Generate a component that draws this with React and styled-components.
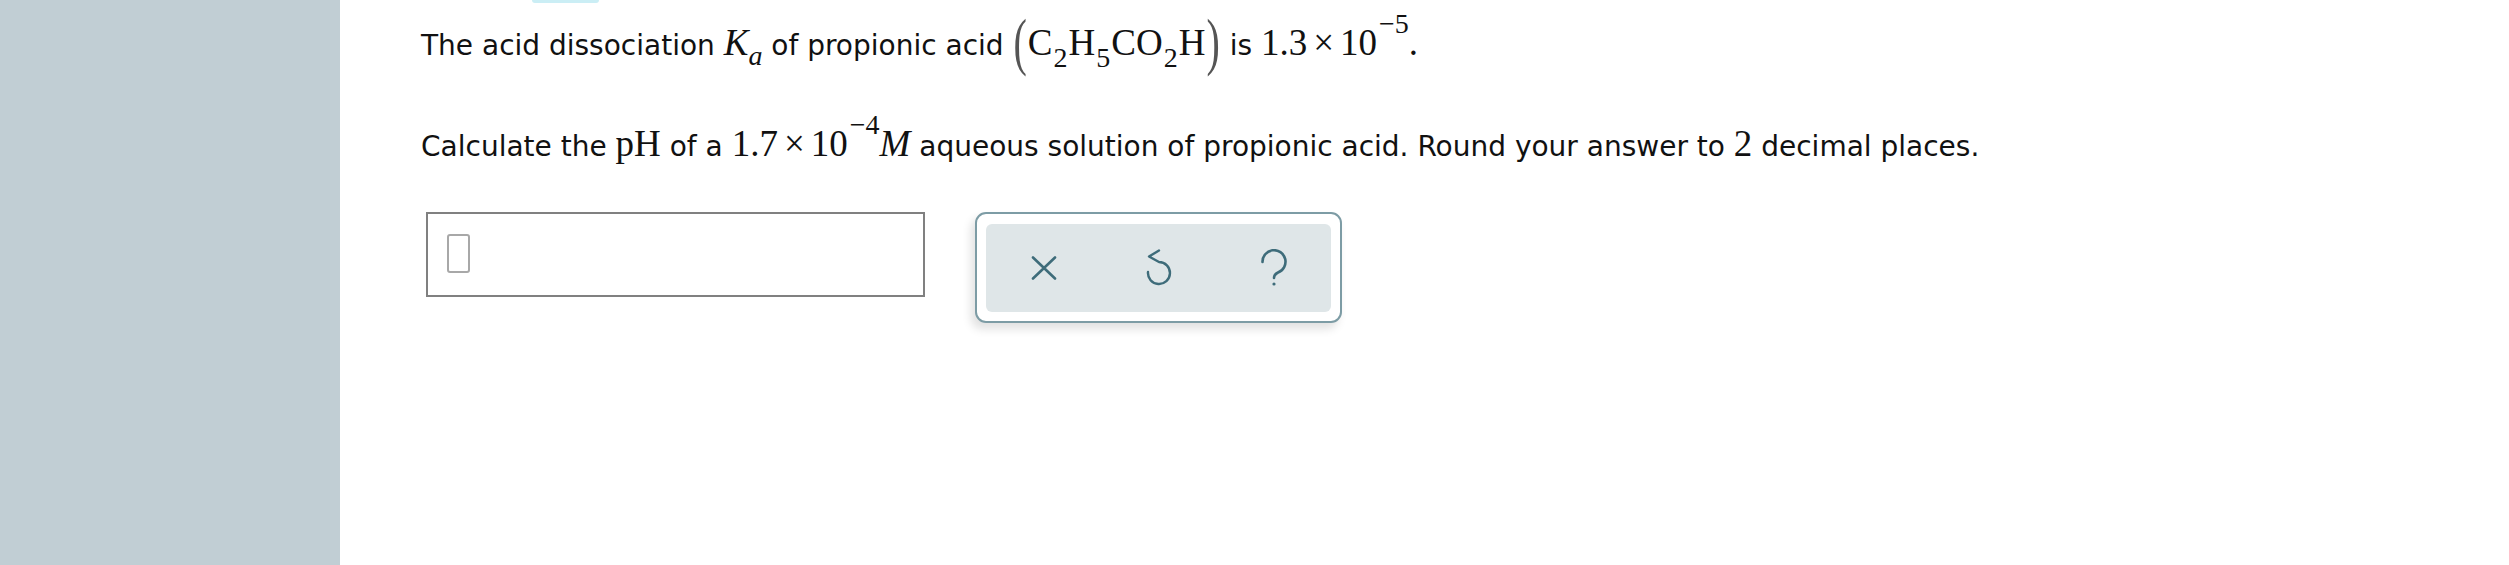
import React from 'react';
import styled, { createGlobalStyle } from 'styled-components';

const GlobalStyle = createGlobalStyle`
  html, body {
    margin: 0;
    padding: 0;
    background: #fff;
  }
  body {
    font-family: "DejaVu Sans", Verdana, sans-serif;
  }
`;

const Page = styled.div`
  display: flex;
  width: 100%;
  height: 565px;
  overflow: hidden;
`;

const Sidebar = styled.aside`
  width: 340px;
  flex-shrink: 0;
  background: #c1ced4;
`;

const Main = styled.main`
  flex: 1;
  display: flex;
  flex-direction: column;
  align-items: flex-start;
  padding-left: 81px;
`;

const TabEdge = styled.div`
  margin-left: 111px;
  width: 67px;
  height: 3px;
  background: #cbeef5;
  border-radius: 0 0 8px 8px;
`;

const Line = styled.p`
  margin: ${(p) => p.$top}px 0 0;
  height: 60px;
  font-size: 28px;
  line-height: 60px;
  color: #111;
  white-space: nowrap;
`;

const MathText = styled.span`
  font-family: "Liberation Serif", "Times New Roman", serif;
  font-size: 37px;
  font-style: ${(p) => (p.$italic ? 'italic' : 'normal')};
`;

const Sub = styled.span`
  font-size: 28px;
  line-height: 0;
  vertical-align: ${(p) => (p.$deep ? -12 : -10)}px;
  margin: 0 ${(p) => (p.$deep ? 1 : 0)}px;
`;

const Sup = styled.span`
  font-size: 28px;
  line-height: 0;
  vertical-align: 22px;
  margin-left: 2px;
`;

const Times = styled.span`
  margin: 0 6px;
`;

const Paren = styled.span`
  display: inline-block;
  font-size: 40px;
  color: #555;
  transform: scaleY(1.6);
  margin: 0 1px;
`;

const AnswerRow = styled.div`
  display: flex;
  align-items: flex-start;
  gap: 50px;
  margin-top: 38px;
  padding-left: 5px;
`;

const AnswerBox = styled.div`
  box-sizing: border-box;
  width: 499px;
  height: 85px;
  border: 2px solid #808080;
  padding: 20px 0 0 19px;
`;

const Caret = styled.div`
  box-sizing: border-box;
  width: 23px;
  height: 39px;
  border: 2px solid #a8a8a8;
  border-radius: 3px;
`;

const Panel = styled.div`
  box-sizing: border-box;
  width: 367px;
  height: 111px;
  padding: 10px 9px 9px;
  background: #fff;
  border: 2px solid #7d9ca5;
  border-radius: 11px;
  box-shadow: -4px 6px 10px rgba(0, 0, 0, 0.12);
`;

const Tray = styled.div`
  display: grid;
  grid-template-columns: repeat(3, 1fr);
  align-items: center;
  justify-items: center;
  height: 100%;
  background: #dfe6e8;
  border-radius: 6px;
`;

const IconButton = styled.button`
  display: flex;
  align-items: center;
  justify-content: center;
  padding: 0;
  border: none;
  background: none;
  color: #3e6c7a;
  cursor: pointer;
`;

const ClearIcon = () => (
  <svg width="26" height="24" viewBox="0 0 26 24" fill="none" stroke="currentColor" strokeWidth="2.6" strokeLinecap="round">
    <path d="M2 1.5 L24 22.5 M24 1.5 L2 22.5" />
  </svg>
);

const UndoIcon = () => (
  <svg width="28" height="38" viewBox="0 0 28 38" fill="none" stroke="currentColor" strokeWidth="2.4" strokeLinecap="round" strokeLinejoin="round">
    <path d="M14 1.5 L4 7.5 L14 13 A11 11 0 1 1 3 23" />
  </svg>
);

const HelpIcon = () => (
  <svg width="28" height="38" viewBox="0 0 28 38" fill="none" stroke="currentColor" strokeWidth="2.6" strokeLinecap="round">
    <path d="M2.5 13 A11.5 11.5 0 1 1 18 23.5 Q14 25.5 14 29" />
    <circle cx="14" cy="35" r="1.6" fill="currentColor" stroke="none" />
  </svg>
);

export default function App() {
  return (
    <>
      <GlobalStyle />
      <Page>
        <Sidebar />
        <Main>
          <TabEdge />
          <Line $top={9}>
            The acid dissociation{' '}
            <MathText $italic>
              K<Sub>a</Sub>
            </MathText>{' '}
            of propionic acid{' '}
            <MathText>
              <Paren>(</Paren>C<Sub $deep>2</Sub>H<Sub $deep>5</Sub>CO<Sub $deep>2</Sub>H<Paren>)</Paren>
            </MathText>{' '}
            is{' '}
            <MathText>
              1.3<Times>×</Times>10<Sup>−5</Sup>.
            </MathText>
          </Line>
          <Line $top={42}>
            Calculate the <MathText>pH</MathText> of a{' '}
            <MathText>
              1.7<Times>×</Times>10<Sup>−4</Sup>
            </MathText>
            <MathText $italic>M</MathText> aqueous solution of propionic acid. Round your answer to{' '}
            <MathText>2</MathText> decimal places.
          </Line>
          <AnswerRow>
            <AnswerBox>
              <Caret />
            </AnswerBox>
            <Panel>
              <Tray>
                <IconButton aria-label="Clear">
                  <ClearIcon />
                </IconButton>
                <IconButton aria-label="Undo">
                  <UndoIcon />
                </IconButton>
                <IconButton aria-label="Help">
                  <HelpIcon />
                </IconButton>
              </Tray>
            </Panel>
          </AnswerRow>
        </Main>
      </Page>
    </>
  );
}
